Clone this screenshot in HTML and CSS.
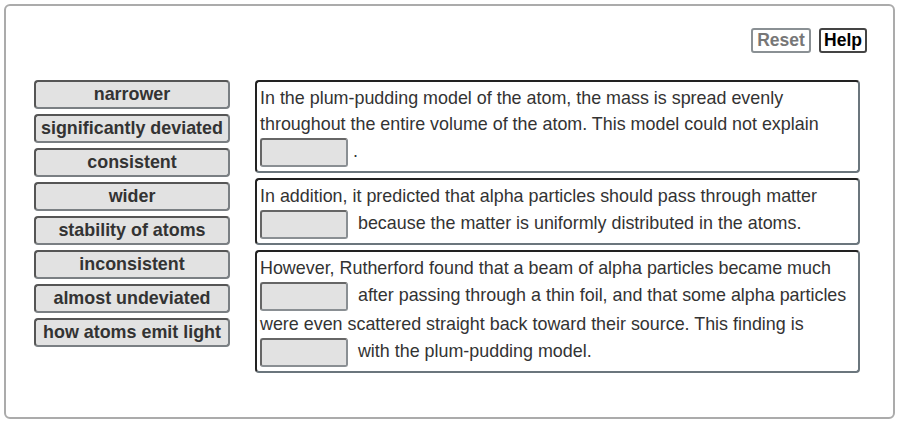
FILE: index.html
```html
<!DOCTYPE html>
<html>
<head>
<meta charset="utf-8">
<link rel="stylesheet" href="styles.css">
</head>
<body>
<div class="frame">
  <div class="toolbar">
    <span class="btn reset">Reset</span>
    <span class="btn help">Help</span>
  </div>
  <div class="main">
    <div class="bank">
      <div class="label">narrower</div>
      <div class="label">significantly deviated</div>
      <div class="label">consistent</div>
      <div class="label">wider</div>
      <div class="label">stability of atoms</div>
      <div class="label">inconsistent</div>
      <div class="label">almost undeviated</div>
      <div class="label">how atoms emit light</div>
    </div>
    <div class="boxes">
      <div class="box">In the plum-pudding model of the atom, the mass is spread evenly throughout the entire volume of the atom. This model could not explain <span class="blank"></span> .</div>
      <div class="box">In addition, it predicted that alpha particles should pass through matter <span class="blank"></span>&nbsp; because the matter is uniformly distributed in the atoms.</div>
      <div class="box">However, Rutherford found that a beam of alpha particles became much <span class="blank"></span>&nbsp; after passing through a thin foil, and that some alpha particles were even scattered straight back toward their source. This finding is <span class="blank"></span>&nbsp; with the plum-pudding model.</div>
    </div>
  </div>
</div>
</body>
</html>
```

FILE: styles.css
```css
html, body {
  margin: 0;
  padding: 0;
  background: #ffffff;
}
body {
  padding: 4px 0 0 4px;
  font-family: "Liberation Sans", Arial, sans-serif;
  color: #333333;
}
.frame {
  box-sizing: border-box;
  width: 891px;
  height: 415px;
  border: 2px solid #ababab;
  border-radius: 6px;
  padding: 22px 26px 0 28px;
}
.toolbar {
  display: flex;
  justify-content: flex-end;
  gap: 8px;
}
.btn {
  box-sizing: border-box;
  height: 25px;
  border: 2px solid #777;
  border-radius: 3px;
  font-weight: bold;
  font-size: 17.5px;
  line-height: 21px;
  padding: 0;
}
.reset {
  width: 60px;
  color: #777777;
  border-color: #8a9094;
  text-align: center;
}
.help {
  width: 48px;
  color: #000000;
  border-color: #444;
  text-align: center;
}
.main {
  display: flex;
  margin-top: 27px;
  gap: 25px;
}
.bank {
  display: flex;
  flex-direction: column;
  gap: 5px;
  width: 196px;
  flex: none;
}
.label {
  box-sizing: border-box;
  height: 29px;
  background: #e2e2e2;
  border: 2px solid;
  border-color: #555 #7a7f83 #7a7f83 #555;
  border-radius: 4px;
  font-weight: bold;
  font-size: 17.9px;
  line-height: 25px;
  text-align: center;
  color: #333333;
  white-space: nowrap;
}
.boxes {
  display: flex;
  flex-direction: column;
  gap: 5px;
  width: 605px;
}
.box {
  box-sizing: border-box;
  width: 605px;
  border: 2px solid;
  border-color: #222 #6b767d #6b767d #222;
  border-radius: 4px;
  padding: 3px 5px 4px 3px;
  font-size: 17.9px;
  line-height: 26px;
  color: #333333;
}
.blank {
  display: inline-block;
  box-sizing: border-box;
  width: 88px;
  height: 29px;
  background: #e2e2e2;
  border: 2px solid;
  border-color: #666 #8a8f93 #8a8f93 #666;
  border-radius: 3px;
  vertical-align: middle;
  margin-top: 1px;
}
```
